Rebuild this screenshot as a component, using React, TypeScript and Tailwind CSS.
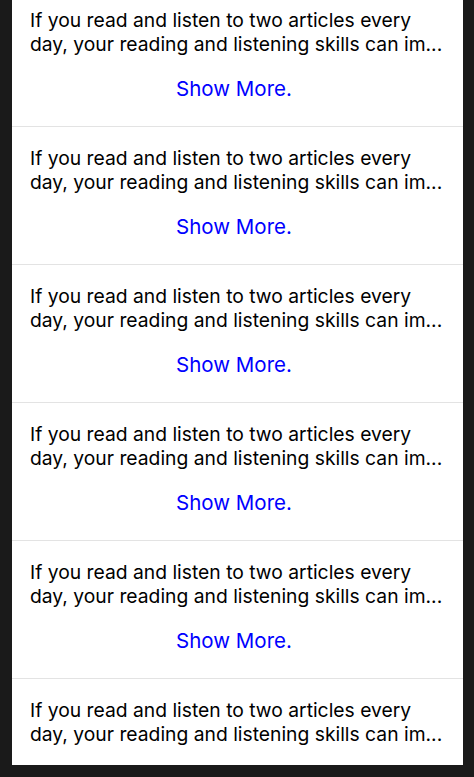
import React from "react";

function Card({ showMore }: { showMore: boolean }) {
  return (
    <div className="border-b border-[#e3e3e3] pl-[18px] pr-[25px] pt-[19px] pb-[25px]">
      <p className="text-[19.3px] leading-[24px] text-black whitespace-nowrap">
        If you read and listen to two articles every
        <br />
        day, your reading and listening skills can im...
      </p>
      {showMore && (
        <div className="mt-[21px] text-center text-[20.5px] leading-[24px] text-[#0000ff]">Show More.</div>
      )}
    </div>
  );
}

export default function App() {
  return (
    <div
      className="w-[474px] h-[777px] bg-[#1a1a1a] pl-[12px] pr-[11px] pb-[12px]"
      style={{ fontFamily: "Inter, 'Noto Sans', sans-serif" }}
    >
      <div className="h-full bg-white overflow-hidden">
        <div className="-mt-[11px]">
          {[0, 1, 2, 3, 4, 5].map((i) => (
            <Card key={i} showMore={i < 5} />
          ))}
        </div>
      </div>
    </div>
  );
}
